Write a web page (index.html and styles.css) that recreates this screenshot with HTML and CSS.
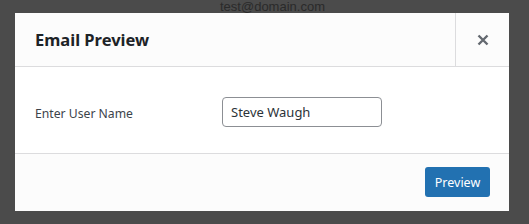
FILE: index.html
```html
<!DOCTYPE html>
<html lang="en">

<head>
  <meta charset="UTF-8">
  <title>Email Preview</title>
  <link rel="stylesheet" href="styles.css">
</head>

<body>

  <!-- Page text behind the overlay -->
  <div class="backdrop-text">test@domain.com</div>

  <div class="modal">
    <div class="modal-header">
      <h2 class="modal-title">Email Preview</h2>
      <button class="modal-close" aria-label="Close">
        <svg width="12" height="12" viewBox="0 0 12 12">
          <path d="M1.5 1.5 L10.5 10.5 M10.5 1.5 L1.5 10.5" stroke="#646970" stroke-width="2.4" stroke-linecap="butt" />
        </svg>
      </button>
    </div>

    <div class="modal-body">
      <label for="userName">Enter User Name</label>
      <input type="text" id="userName" value="Steve Waugh">
    </div>

    <div class="modal-footer">
      <button class="preview-btn">Preview</button>
    </div>
  </div>

</body>

</html>
```

FILE: styles.css
```css
/* Reset */
* {
  margin: 0;
  padding: 0;
  box-sizing: border-box;
}

body {
  background-color: #4b4b4b;
  font-family: 'Noto Sans', 'Open Sans', sans-serif;
  width: 529px;
  height: 224px;
  overflow: hidden;
}

/* Text of the page behind the dark overlay */
.backdrop-text {
  height: 13px;
  line-height: 14px;
  padding-left: 220px;
  font-family: 'Liberation Sans', Arial, sans-serif;
  font-size: 13px;
  color: #2a2a2a;
}

.modal {
  margin-left: 15px;
  width: 494px;
  background-color: #fcfcfc;
}

/* Header with title and close button */
.modal-header {
  display: flex;
  height: 54px;
  border-bottom: 1px solid #dcdcde;
}

.modal-title {
  flex: 1;
  padding-left: 20px;
  font-size: 16.5px;
  font-weight: 700;
  line-height: 54px;
  color: #1d2327;
}

.modal-close {
  width: 54px;
  border: none;
  border-left: 1px solid #dcdcde;
  background: none;
  display: flex;
  align-items: center;
  justify-content: center;
  cursor: pointer;
}

/* Body with the form row */
.modal-body {
  display: flex;
  align-items: center;
  height: 87px;
  padding: 3px 20px 0 20px;
  background-color: #fff;
  border-bottom: 1px solid #dcdcde;
}

.modal-body label {
  width: 187px;
  font-size: 12.2px;
  color: #3c434a;
  padding-top: 3px;
}

.modal-body input {
  width: 160px;
  height: 30px;
  padding: 0 8px;
  border: 1px solid #8c8f94;
  border-radius: 4px;
  font-family: inherit;
  font-size: 13px;
  color: #2c3338;
  background-color: #fff;
}

/* Footer with action button */
.modal-footer {
  display: flex;
  justify-content: flex-end;
  padding: 13px 19px 14px 0;
}

.preview-btn {
  width: 65px;
  height: 30px;
  border: none;
  border-radius: 3px;
  background-color: #2271b1;
  color: #fff;
  font-family: inherit;
  font-size: 12.5px;
  cursor: pointer;
}
```
